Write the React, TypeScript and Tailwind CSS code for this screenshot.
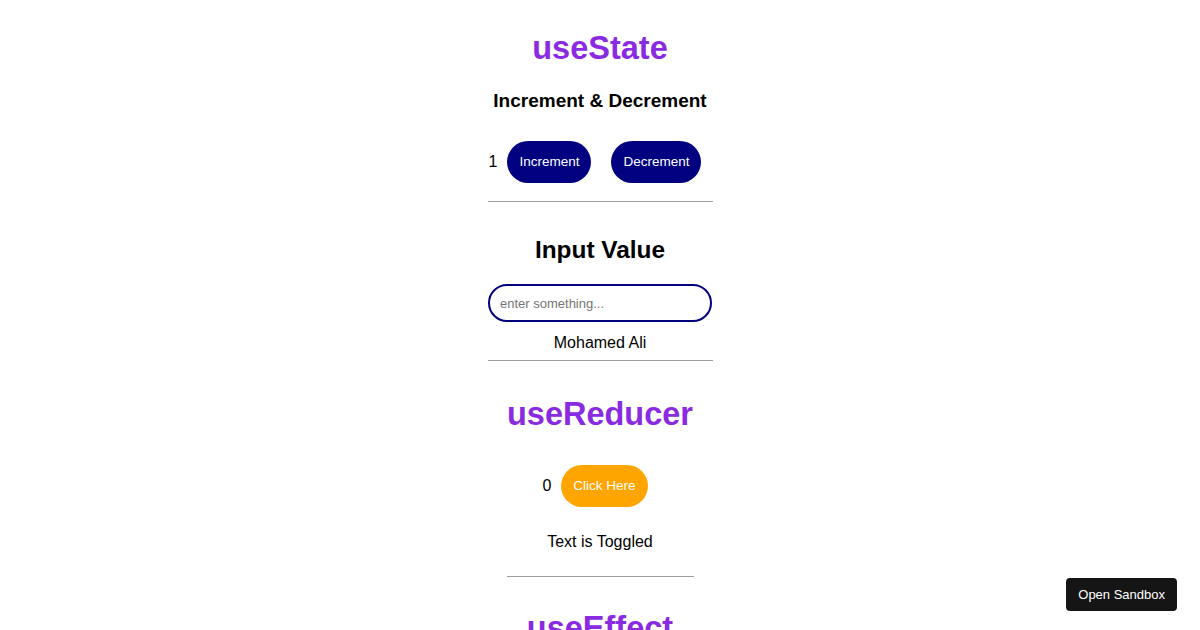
const Divider = ({ width }: { width: string }) => (
  <div className={`h-px bg-[#9e9e9e] ${width}`} />
);

const PillButton = ({ label, color }: { label: string; color: string }) => (
  <button
    type="button"
    className={`mx-[10px] h-[42px] rounded-full px-3 text-[13.5px] text-white ${color}`}
  >
    {label}
  </button>
);

export default function App() {
  return (
    <div className="relative min-h-screen bg-white font-['Liberation_Sans',Arial,sans-serif] text-black">
      <div className="flex flex-col items-center pt-[30px]">
        {/* useState */}
        <h1 className="text-[32.5px] leading-[37px] font-bold text-[#8a2be2]">useState</h1>
        <h3 className="mt-[23px] text-[19px] leading-[22px] font-bold">Increment &amp; Decrement</h3>

        <div className="mt-[29px] flex items-center">
          <span className="text-base leading-[18px]">1</span>
          <PillButton label="Increment" color="bg-[#000080]" />
          <PillButton label="Decrement" color="bg-[#000080]" />
        </div>

        <div className="mt-[18px]">
          <Divider width="w-[225px]" />
        </div>

        <h2 className="mt-[34px] text-[24.4px] leading-[28px] font-bold">Input Value</h2>
        <input
          type="text"
          placeholder="enter something..."
          className="mt-[20px] h-[38px] w-[224px] rounded-full border-2 border-[#000080] px-[10px] text-[13px] outline-none placeholder:text-[#757575]"
        />
        <p className="mt-[12px] text-base leading-[18px]">Mohamed Ali</p>

        <div className="mt-[8px]">
          <Divider width="w-[225px]" />
        </div>

        {/* useReducer */}
        <h1 className="mt-[35px] text-[32.5px] leading-[37px] font-bold text-[#8a2be2]">useReducer</h1>
        <div className="mt-[32px] flex items-center">
          <span className="text-base leading-[18px]">0</span>
          <PillButton label="Click Here" color="bg-[#ffa500]" />
        </div>
        <p className="mt-[26px] text-base leading-[18px]">Text is Toggled</p>

        <div className="mt-[25px]">
          <Divider width="w-[187px]" />
        </div>

        {/* useEffect */}
        <h1 className="mt-[33px] text-[32.5px] leading-[37px] font-bold text-[#8a2be2]">useEffect</h1>
      </div>

      <button
        type="button"
        className="fixed right-[23px] bottom-[19px] h-[33px] rounded-[4px] bg-[#151515] px-3 text-[13px] text-white"
      >
        Open Sandbox
      </button>
    </div>
  );
}
